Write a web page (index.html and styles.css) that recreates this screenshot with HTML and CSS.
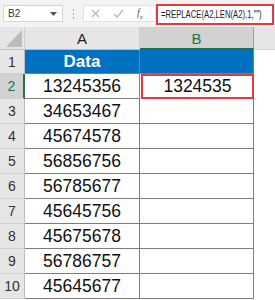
FILE: index.html
```html
<!DOCTYPE html>
<html lang="en">
<head>
  <meta charset="UTF-8">
  <title>REPLACE formula</title>
  <link rel="stylesheet" href="styles.css">
</head>
<body>
  <div class="formula-bar">
    <div class="name-box">
      <span>B2</span>
      <svg class="caret" width="7" height="4" viewBox="0 0 7 4"><path d="M0 0h7L3.5 4z" fill="#555"/></svg>
    </div>
    <div class="dots"><i></i><i></i><i></i></div>
    <div class="fx-box">
      <svg width="9" height="9" viewBox="0 0 9 9"><path d="M1 1l7 7M8 1l-7 7" stroke="#b5b5b5" stroke-width="1.1"/></svg>
      <svg width="11" height="9" viewBox="0 0 11 9"><path d="M1 5l3 3 6-7" stroke="#b5b5b5" stroke-width="1.2" fill="none"/></svg>
      <span class="fx">f<sub>x</sub></span>
    </div>
    <div class="formula"><span>=REPLACE(A2,LEN(A2),1,"")</span></div>
  </div>

  <div class="sheet">
    <div class="corner"><div class="tri"></div></div>
    <div class="col-head">A</div>
    <div class="col-head active">B</div>
    <div class="col-rest"></div>

    <div class="row-head">1</div>
    <div class="cell title">Data</div>
    <div class="cell title"></div>
    <div class="rest"></div>

    <div class="row-head active">2</div>
    <div class="cell">13245356</div>
    <div class="cell picked">1324535</div>
    <div class="rest"></div>

    <div class="row-head">3</div><div class="cell">34653467</div><div class="cell"></div><div class="rest"></div>
    <div class="row-head">4</div><div class="cell">45674578</div><div class="cell"></div><div class="rest"></div>
    <div class="row-head">5</div><div class="cell">56856756</div><div class="cell"></div><div class="rest"></div>
    <div class="row-head">6</div><div class="cell">56785677</div><div class="cell"></div><div class="rest"></div>
    <div class="row-head">7</div><div class="cell">45645756</div><div class="cell"></div><div class="rest"></div>
    <div class="row-head">8</div><div class="cell">45675678</div><div class="cell"></div><div class="rest"></div>
    <div class="row-head">9</div><div class="cell">56786757</div><div class="cell"></div><div class="rest"></div>
    <div class="row-head">10</div><div class="cell">45645677</div><div class="cell"></div><div class="rest"></div>
  </div>
</body>
</html>
```

FILE: styles.css
```css
* { box-sizing: border-box; margin: 0; padding: 0; }
body {
  font-family: "Liberation Sans", Arial, sans-serif;
  background: #fff;
  width: 275px;
  overflow: hidden;
}
.formula-bar {
  display: flex;
  align-items: flex-start;
  height: 27px;
  background: #f3f3f3;
  padding: 5px 1px 0 3px;
}
.name-box {
  width: 60px;
  height: 17px;
  background: #fff;
  border: 1px solid #d4d4d4;
  display: flex;
  align-items: center;
  justify-content: space-between;
  padding: 0 5px 0 4px;
  font-size: 10px;
  color: #333;
}
.dots {
  width: 20px;
  height: 17px;
  display: flex;
  flex-direction: column;
  align-items: center;
  justify-content: center;
  gap: 2px;
}
.dots i { width: 1px; height: 2px; background: #a8a8a8; }
.fx-box {
  width: 73px;
  height: 17px;
  background: #fff;
  border: 1px solid #e2e2e2;
  display: flex;
  align-items: center;
  gap: 13px;
  padding-left: 7px;
}
.fx {
  font-family: "Liberation Serif", serif;
  font-style: italic;
  font-size: 10px;
  color: #555;
}
.fx sub { font-size: 7px; }
.formula {
  margin-top: -1px;
  width: 118px;
  height: 21px;
  border: 2px solid #e8383a;
  background: #fff;
  font-size: 10px;
  line-height: 17px;
  padding-left: 3px;
  color: #222;
  white-space: nowrap;
  overflow: hidden;
}
.formula span {
  display: inline-block;
  transform: scaleX(0.77);
  transform-origin: left center;
}
.sheet {
  display: grid;
  grid-template-columns: 25px 115px 114px 21px;
  grid-template-rows: 23px 24px repeat(9, 25px);
}
.corner {
  background: #e6e6e6;
  border-right: 1px solid #cfcfcf;
  border-bottom: 1px solid #bdbdbd;
  position: relative;
}
.tri {
  position: absolute;
  right: 2px;
  bottom: 2px;
  width: 0;
  height: 0;
  border-left: 16px solid transparent;
  border-bottom: 17px solid #bcbcbc;
}
.col-head {
  background: #e6e6e6;
  border-right: 1px solid #cfcfcf;
  border-bottom: 1px solid #bdbdbd;
  text-align: center;
  font-size: 15px;
  line-height: 23px;
  color: #222;
}
.col-head.active {
  background: #d2d2d2;
  color: #217346;
  border-bottom: 2px solid #217346;
  border-right: 1px solid #9f9f9f;
}
.col-rest {
  background: #e6e6e6;
  border-bottom: 1px solid #d6d6d6;
}
.row-head {
  background: #e6e6e6;
  border-right: 1px solid #bdbdbd;
  border-bottom: 1px solid #d0d0d0;
  text-align: center;
  font-size: 14px;
  line-height: 24px;
  color: #333;
}
.row-head.active {
  background: #d2d2d2;
  color: #217346;
  border-right: 2px solid #217346;
}
.cell {
  border-right: 1px solid #7d7d7d;
  border-bottom: 1px solid #7d7d7d;
  text-align: center;
  font-size: 17.5px;
  line-height: 24px;
  color: #111;
}
.cell.title {
  background: #0070c0;
  color: #fff;
  font-weight: bold;
  font-size: 17px;
}
.cell.picked {
  border: 2px solid #e8383a;
  line-height: 21px;
  margin-left: 1px;
}
.rest { background: #fff; }
```
